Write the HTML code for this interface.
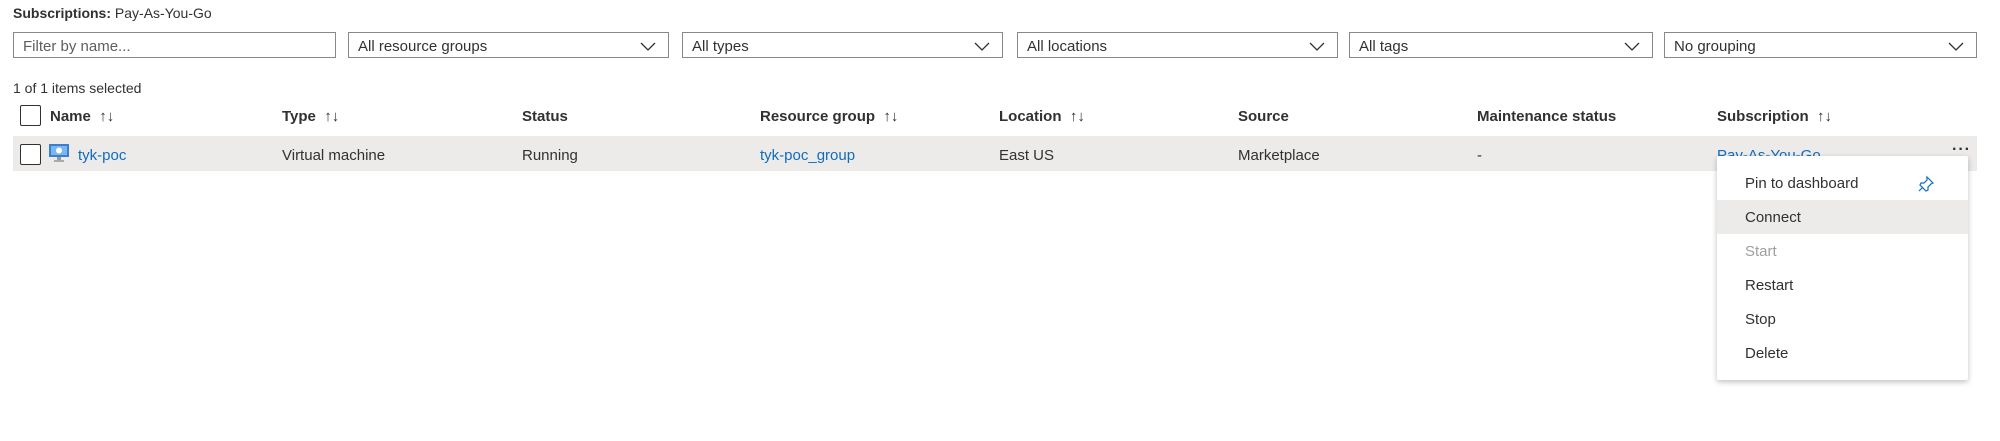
<!DOCTYPE html>
<html><head><style>
*{box-sizing:border-box;margin:0;padding:0}
body{width:2000px;height:441px;background:#fff;font-family:"Liberation Sans",sans-serif;font-size:15px;color:#323130;position:relative;overflow:hidden}
.a{position:absolute;white-space:nowrap}
.box{position:absolute;border:1px solid #8a8886;height:26px;top:32px;padding:0 9px;line-height:27px;font-size:15px}
.chev{position:absolute;right:12px;top:7px;width:16px;height:12px}
.cb{position:absolute;width:21px;height:21px;border:1px solid #323130;border-radius:2px;background:#fff}
.h{font-weight:bold;top:108px}
.lnk{color:#0f6cbd}
.menu{position:absolute;left:1717px;top:156px;width:251px;height:224px;background:#fff;box-shadow:0 2px 6px rgba(0,0,0,.25);border-radius:2px}
.mi{position:absolute;left:0;width:251px;height:34px;line-height:35px;padding-left:28px;font-size:15px}
</style></head><body>
<div class="a" style="left:13px;top:5px;font-size:14px"><b>Subscriptions:</b> Pay-As-You-Go</div>
<div class="box" style="left:13px;width:323px;color:#605e5c">Filter by name...</div>
<div class="box" style="left:348px;width:321px">All resource groups<svg class="chev" viewBox="0 0 16 12"><path d="M1 3l7 7 7-7" fill="none" stroke="#323130" stroke-width="1.3"/></svg></div>
<div class="box" style="left:682px;width:321px">All types<svg class="chev" viewBox="0 0 16 12"><path d="M1 3l7 7 7-7" fill="none" stroke="#323130" stroke-width="1.3"/></svg></div>
<div class="box" style="left:1017px;width:321px">All locations<svg class="chev" viewBox="0 0 16 12"><path d="M1 3l7 7 7-7" fill="none" stroke="#323130" stroke-width="1.3"/></svg></div>
<div class="box" style="left:1349px;width:304px">All tags<svg class="chev" viewBox="0 0 16 12"><path d="M1 3l7 7 7-7" fill="none" stroke="#323130" stroke-width="1.3"/></svg></div>
<div class="box" style="left:1664px;width:313px">No grouping<svg class="chev" viewBox="0 0 16 12"><path d="M1 3l7 7 7-7" fill="none" stroke="#323130" stroke-width="1.3"/></svg></div>
<div class="a" style="left:13px;top:80px;font-size:14px">1 of 1 items selected</div>
<div class="cb" style="left:20px;top:105px"></div>
<div class="a h" style="left:50px">Name &nbsp;<span style="font-weight:normal">↑↓</span></div>
<div class="a h" style="left:282px">Type &nbsp;<span style="font-weight:normal">↑↓</span></div>
<div class="a h" style="left:522px">Status</div>
<div class="a h" style="left:760px">Resource group &nbsp;<span style="font-weight:normal">↑↓</span></div>
<div class="a h" style="left:999px">Location &nbsp;<span style="font-weight:normal">↑↓</span></div>
<div class="a h" style="left:1238px">Source</div>
<div class="a h" style="left:1477px">Maintenance status</div>
<div class="a h" style="left:1717px">Subscription &nbsp;<span style="font-weight:normal">↑↓</span></div>
<div class="a" style="left:13px;top:136px;width:1964px;height:35px;background:#edebe9"></div>
<div class="cb" style="left:20px;top:144px"></div>
<svg class="a" style="left:48px;top:143px" width="22" height="20" viewBox="0 0 22 20"><rect x="1" y="1" width="20" height="13" fill="#3a7fd0"/><rect x="3" y="3" width="16" height="9" fill="#7bb6ee"/><circle cx="11" cy="7.5" r="3" fill="#fff"/><rect x="9" y="14" width="4" height="3" fill="#999"/><rect x="6" y="17" width="10" height="2" fill="#aaa"/></svg>
<div class="a lnk" style="left:78px;top:147px">tyk-poc</div>
<div class="a" style="left:282px;top:147px">Virtual machine</div>
<div class="a" style="left:522px;top:147px">Running</div>
<div class="a lnk" style="left:760px;top:147px">tyk-poc_group</div>
<div class="a" style="left:999px;top:147px">East US</div>
<div class="a" style="left:1238px;top:147px">Marketplace</div>
<div class="a" style="left:1477px;top:147px">-</div>
<div class="a lnk" style="left:1717px;top:147px">Pay-As-You-Go</div>
<div class="a" style="left:1952px;top:141px;font-size:16px;letter-spacing:1px;font-weight:bold">···</div>
<div class="menu">
<div class="mi" style="top:10px">Pin to dashboard<svg style="position:absolute;left:200px;top:9px" width="18" height="18" viewBox="0 0 18 18"><path d="M10 2l6 6-2 1-3 3 0 3-2 1-6-6 1-2 3 0 3-3z M6 12l-4 4" fill="none" stroke="#0f6cbd" stroke-width="1.2"/></svg></div>
<div class="mi" style="top:44px;background:#edebe9">Connect</div>
<div class="mi" style="top:78px;color:#a19f9d">Start</div>
<div class="mi" style="top:112px">Restart</div>
<div class="mi" style="top:146px">Stop</div>
<div class="mi" style="top:180px">Delete</div>
</div>
</body></html>
